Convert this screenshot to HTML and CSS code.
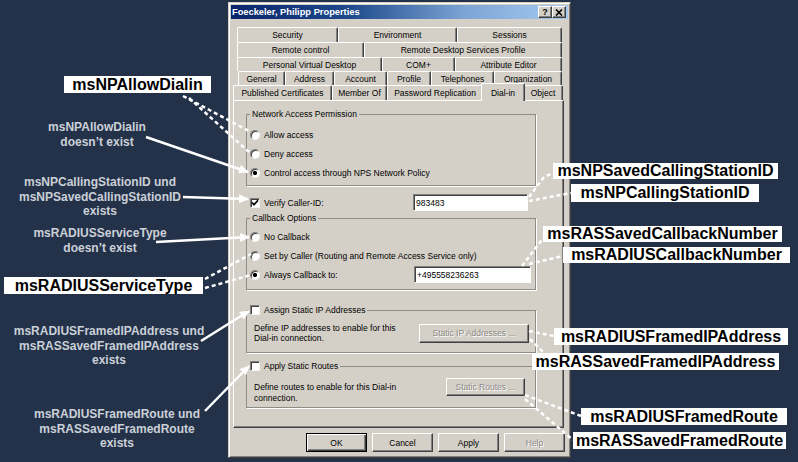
FILE: index.html
```html
<!DOCTYPE html>
<html>
<head>
<meta charset="utf-8">
<link rel="stylesheet" href="styles.css">
</head>
<body>
<div class="stage">
  <div class="window">
    <div class="titlebar">
      <span class="title">Foeckeler, Philipp Properties</span>
      <span class="tbtns">
        <span class="tbtn">?</span>
        <span class="tbtn"><svg width="8" height="7" viewBox="0 0 8 7"><path d="M1 0.5 L7 6.5 M7 0.5 L1 6.5" stroke="#000" stroke-width="1.6"/></svg></span>
      </span>
    </div>
    <div class="tabs">
      <div class="trow r1"><div class="tab">Security</div><div class="tab">Environment</div><div class="tab">Sessions</div></div>
      <div class="trow r2"><div class="tab">Remote control</div><div class="tab">Remote Desktop Services Profile</div></div>
      <div class="trow r3"><div class="tab">Personal Virtual Desktop</div><div class="tab">COM+</div><div class="tab">Attribute Editor</div></div>
      <div class="trow r4"><div class="tab">General</div><div class="tab">Address</div><div class="tab">Account</div><div class="tab">Profile</div><div class="tab">Telephones</div><div class="tab">Organization</div></div>
      <div class="trow r5"><div class="tab">Published Certificates</div><div class="tab">Member Of</div><div class="tab">Password Replication</div><div class="tab active">Dial-in</div><div class="tab">Object</div></div>
    </div>
    <div class="panel">
      <fieldset class="grp g1">
        <legend>Network Access Permission</legend>
        <div class="opt"><span class="radio"></span>Allow access</div>
        <div class="opt"><span class="radio"></span>Deny access</div>
        <div class="opt"><span class="radio on"></span>Control access through NPS Network Policy</div>
      </fieldset>
      <div class="verify">
        <span class="check"><svg width="8" height="8" viewBox="0 0 8 8"><path d="M1 3.5 L3 5.8 L7 1.2" stroke="#000" stroke-width="1.7" fill="none"/></svg></span>
        <span>Verify Caller-ID:</span>
        <span class="field f1">983483</span>
      </div>
      <fieldset class="grp g2">
        <legend>Callback Options</legend>
        <div class="opt o1"><span class="radio"></span>No Callback</div>
        <div class="opt o2"><span class="radio"></span>Set by Caller (Routing and Remote Access Service only)</div>
        <div class="opt o2"><span class="radio on"></span>Always Callback to:<span class="field f2">+495558236263</span></div>
      </fieldset>
      <fieldset class="grp g3">
        <legend class="cklegend"><span class="check"></span>Assign Static IP Addresses</legend>
        <div class="grow gr3">
          <div class="desc">Define IP addresses to enable for this<br>Dial-in connection.</div>
          <div class="btn dis b-ip">Static IP Addresses ...</div>
        </div>
      </fieldset>
      <fieldset class="grp g4">
        <legend class="cklegend"><span class="check"></span>Apply Static Routes</legend>
        <div class="grow gr4">
          <div class="desc">Define routes to enable for this Dial-in<br>connection.</div>
          <div class="btn dis b-rt">Static Routes ...</div>
        </div>
      </fieldset>
    </div>
    <div class="buttons">
      <div class="btn def">OK</div>
      <div class="btn">Cancel</div>
      <div class="btn">Apply</div>
      <div class="btn dis">Help</div>
    </div>
  </div>
</div>

<svg class="overlay" width="798" height="462" viewBox="0 0 798 462">
  <defs>
    <marker id="ah" markerWidth="10" markerHeight="9" refX="9" refY="4.5" orient="auto" markerUnits="userSpaceOnUse">
      <path d="M0,0 L10,4.5 L0,9 Z" fill="#fff"/>
    </marker>
  </defs>
  <g stroke="#fff" stroke-width="2.5" fill="none">
    <line x1="146" y1="137" x2="248" y2="172" marker-end="url(#ah)"/>
    <line x1="183" y1="197" x2="248" y2="199" marker-end="url(#ah)"/>
    <line x1="156" y1="242" x2="249" y2="237" marker-end="url(#ah)"/>
    <line x1="201" y1="341" x2="249" y2="311" marker-end="url(#ah)"/>
    <line x1="205" y1="411" x2="249" y2="366" marker-end="url(#ah)"/>
  </g>
  <g stroke="#fff" stroke-width="2.5" fill="none" stroke-dasharray="4 3">
    <line x1="183" y1="96" x2="249" y2="131"/>
    <line x1="189" y1="98" x2="249" y2="152"/>
    <line x1="205" y1="279" x2="251" y2="254"/>
    <line x1="205" y1="288" x2="251" y2="275"/>
    <line x1="529" y1="201" x2="571" y2="193"/>
    <polyline points="529,197 544,177 553,173"/>
    <line x1="522" y1="266" x2="544" y2="237"/>
    <line x1="529" y1="264" x2="563" y2="256"/>
    <line x1="529" y1="331" x2="554" y2="336"/>
    <line x1="530" y1="339" x2="545" y2="354"/>
    <line x1="525" y1="395" x2="581" y2="416"/>
    <line x1="525" y1="399" x2="573" y2="440"/>
  </g>
</svg>

<div class="note n1">msNPAllowDialin<br>doesn’t exist</div>
<div class="note n2">msNPCallingStationID und<br>msNPSavedCallingStationID<br>exists</div>
<div class="note n3">msRADIUSServiceType<br>doesn’t exist</div>
<div class="note n4">msRADIUSFramedIPAddress und<br>msRASSavedFramedIPAddress<br>exists</div>
<div class="note n5">msRADIUSFramedRoute und<br>msRASSavedFramedRoute<br>exists</div>

<div class="tag l1">msNPAllowDialin</div>
<div class="tag l2">msRADIUSServiceType</div>
<div class="tag t1">msNPSavedCallingStationID</div>
<div class="tag t2">msNPCallingStationID</div>
<div class="tag t3">msRASSavedCallbackNumber</div>
<div class="tag t4">msRADIUSCallbackNumber</div>
<div class="tag t5">msRADIUSFramedIPAddress</div>
<div class="tag t6">msRASSavedFramedIPAddress</div>
<div class="tag t7">msRADIUSFramedRoute</div>
<div class="tag t8">msRASSavedFramedRoute</div>
</body>
</html>
```

FILE: styles.css
```css
html, body {
  margin: 0;
  padding: 0;
}
body {
  width: 798px;
  height: 462px;
  overflow: hidden;
  position: relative;
  background: #233249;
  font-family: "Liberation Sans", Arial, sans-serif;
}
.stage {
  padding: 2px 0 0 228px;
}
.window {
  box-sizing: border-box;
  width: 343px;
  height: 456px;
  background: #d4d0c8;
  border: 1px solid;
  border-color: #d4d0c8 #404040 #404040 #d4d0c8;
  box-shadow: inset 1px 1px #fff, inset -1px -1px #808080;
  padding: 2px;
  display: flex;
  flex-direction: column;
  font-size: 8.5px;
  color: #000;
}
.titlebar {
  height: 14px;
  display: flex;
  align-items: center;
  justify-content: space-between;
  padding: 0 2px 0 1px;
  background: linear-gradient(90deg, #0a246a 0%, #1e4a8c 35%, #7ea6d6 70%, #a6caf0 100%);
}
.title {
  color: #fff;
  font-weight: bold;
  font-size: 9.3px;
  white-space: nowrap;
}
.tbtns {
  display: flex;
}
.tbtn {
  box-sizing: border-box;
  width: 14px;
  height: 12px;
  background: #d4d0c8;
  border: 1px solid;
  border-color: #fff #404040 #404040 #fff;
  box-shadow: inset -1px -1px #808080;
  display: flex;
  align-items: center;
  justify-content: center;
  font-weight: bold;
  font-size: 9px;
  line-height: 1;
}

/* tabs */
.tabs {
  margin-top: 8px;
}
.trow {
  display: grid;
  margin-left: 6px;
  width: 325px;
}
.r1 { grid-template-columns: 101px 119px 1fr; height: 15px; }
.r2 { grid-template-columns: 127px 1fr; height: 15px; }
.r3 { grid-template-columns: 145px 73px 1fr; height: 14px; }
.r4 { grid-template-columns: 47px 49px 53px 44px 63px 1fr; height: 14px; margin-left: 7px; width: 324px; }
.r5 { grid-template-columns: 99px 55px 96px 40px 1fr; height: 15px; margin-left: 2px; width: 330px; }
.tab {
  box-sizing: border-box;
  background: #d4d0c8;
  border-top: 1px solid #fff;
  border-left: 1px solid #fff;
  border-right: 1px solid #404040;
  box-shadow: inset -1px 0 #808080;
  border-radius: 2px 2px 0 0;
  display: flex;
  align-items: center;
  justify-content: center;
  white-space: nowrap;
  overflow: hidden;
}
.tab.active {
  margin: -2px -2px -1px -2px;
  position: relative;
  z-index: 1;
}

/* page */
.panel {
  box-sizing: border-box;
  margin-left: 2px;
  width: 331px;
  height: 328px;
  border: 1px solid;
  border-color: #fff #404040 #404040 #fff;
  box-shadow: inset -1px -1px #808080;
  padding: 7px 27px 0 12px;
}
.grp {
  margin: 0;
  padding: 0;
  min-width: 0;
  border: 1px solid #8e8c86;
  box-shadow: 1px 1px 0 #fff;
}
.grp legend {
  padding: 0 2px;
  margin-left: 3px;
  height: 12px;
  line-height: 12px;
}
.cklegend {
  display: flex;
  align-items: center;
}
.grp legend.cklegend {
  margin-left: 2px;
  padding: 0 2px 0 1px;
}
.g1 { padding: 5px 0 3px; }
.g2 { margin-top: 1px; padding: 4px 0 5px; }
.g3 { margin-top: 14px; padding: 6px 0 8px; }
.g4 { margin-top: 7px; padding: 0 0 3px; }

.opt {
  display: flex;
  align-items: center;
  height: 19px;
  padding-left: 3px;
  white-space: nowrap;
}
.o1 { height: 18px; }
.radio {
  box-sizing: border-box;
  width: 10px;
  height: 10px;
  border-radius: 50%;
  border: 1px solid;
  border-color: #808080 #f4f4f4 #f4f4f4 #808080;
  background: #fff;
  box-shadow: inset 1px 1px #404040;
  margin-right: 4px;
  flex: none;
}
.radio.on {
  background: radial-gradient(circle, #000 0 1.8px, #fff 2.4px);
}
.check {
  box-sizing: border-box;
  width: 10px;
  height: 10px;
  border: 1px solid;
  border-color: #808080 #f4f4f4 #f4f4f4 #808080;
  background: #fff;
  box-shadow: inset 1px 1px #404040;
  margin-right: 4px;
  flex: none;
  display: flex;
  align-items: center;
  justify-content: center;
}
.verify {
  display: flex;
  align-items: center;
  height: 17px;
  margin-top: 8px;
  padding-left: 4px;
  white-space: nowrap;
}
.field {
  box-sizing: border-box;
  height: 17px;
  background: #fff;
  border: 1px solid;
  border-color: #808080 #fff #fff #808080;
  box-shadow: inset 1px 1px #404040;
  margin-left: auto;
  padding: 0 2px;
  display: flex;
  align-items: center;
}
.f1 { width: 115px; margin-right: 8px; }
.f2 { width: 117px; margin-right: 4px; }

.grow {
  display: flex;
  padding-left: 7px;
}
.gr3 {
  align-items: center;
  height: 22px;
}
.gr4 {
  align-items: flex-start;
  height: 32px;
}
.desc {
  line-height: 10.5px;
  white-space: nowrap;
}
.gr4 .desc {
  margin-top: 10px;
  line-height: 11px;
}
.btn {
  box-sizing: border-box;
  height: 19px;
  width: 61px;
  background: #d4d0c8;
  border: 1px solid;
  border-color: #fff #404040 #404040 #fff;
  box-shadow: inset -1px -1px #808080;
  display: flex;
  align-items: center;
  justify-content: center;
  white-space: nowrap;
}
.btn.dis {
  color: #8a8884;
  text-shadow: 1px 1px 0 #fff;
}
.btn.def {
  border: 1px solid #000;
  box-shadow: inset 1px 1px #fff, inset -1px -1px #404040, inset -2px -2px #808080;
}
.b-ip {
  width: 110px;
  margin-left: auto;
  margin-right: 6px;
}
.b-rt {
  width: 79px;
  height: 18px;
  margin-left: auto;
  margin-right: 10px;
  margin-top: 6px;
}
.buttons {
  display: flex;
  justify-content: flex-end;
  gap: 5px;
  margin-top: 5px;
  margin-right: 3px;
}

/* annotations */
.overlay {
  position: absolute;
  left: 0;
  top: 0;
}
.note {
  position: absolute;
  color: #cbd0d8;
  font-weight: bold;
  font-size: 12px;
  line-height: 14.5px;
  text-align: center;
  white-space: nowrap;
}
.n1 { left: 20px; width: 154px; top: 120px; }
.n2 { left: 10px; width: 180px; top: 175px; }
.n3 { left: 10px; width: 180px; top: 226px; }
.n4 { left: 4px; width: 210px; top: 324px; }
.n5 { left: 17px; width: 200px; top: 407px; }

.tag {
  position: absolute;
  background: #fff;
  color: #000;
  font-weight: bold;
  font-size: 16px;
  line-height: 17px;
  height: 17px;
  text-align: center;
  white-space: nowrap;
}
.l1 { left: 64px; top: 76px; width: 147px; }
.l2 { left: 4px; top: 277px; width: 199px; }
.t1 { left: 553px; top: 163px; width: 225px; height: 16px; line-height: 16px; }
.t2 { left: 571px; top: 184px; width: 188px; height: 18px; line-height: 18px; }
.t3 { left: 543px; top: 226px; width: 239px; height: 16px; line-height: 16px; }
.t4 { left: 563px; top: 247px; width: 227px; height: 16px; line-height: 16px; }
.t5 { left: 554px; top: 328px; width: 234px; }
.t6 { left: 532px; top: 353px; width: 247px; }
.t7 { left: 581px; top: 408px; width: 206px; }
.t8 { left: 573px; top: 432px; width: 213px; }
```
